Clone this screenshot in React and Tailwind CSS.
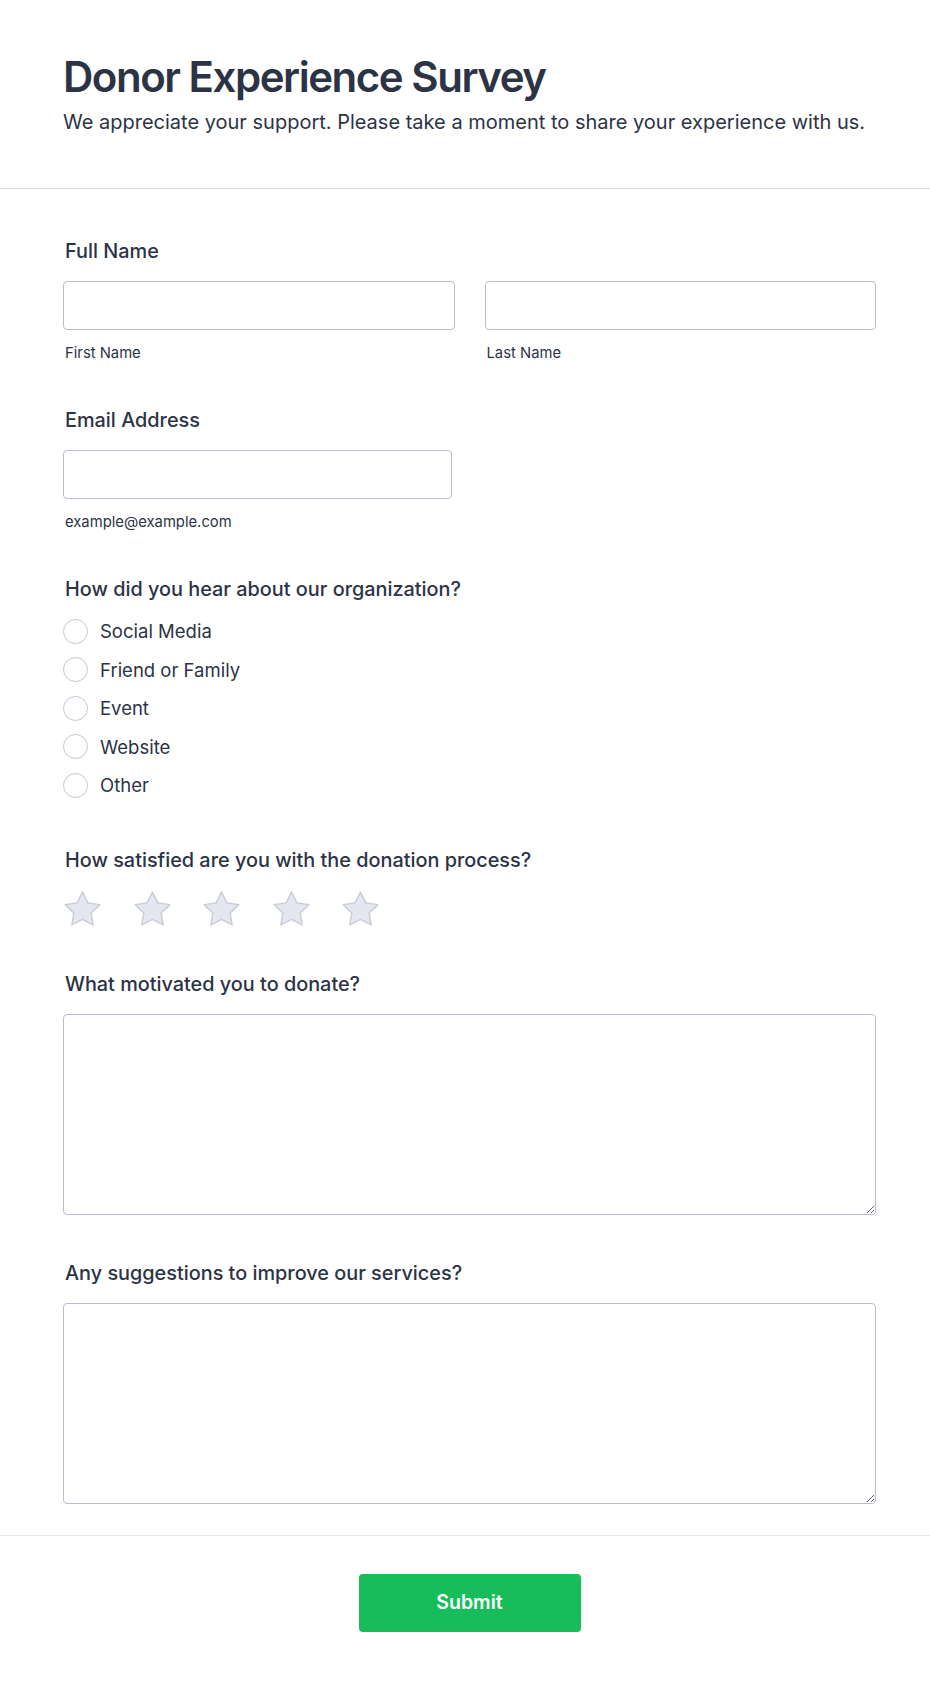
import React from "react";

const labelCls = "block pl-[2px] text-[19.85px] leading-[24px] font-medium text-[#2c3345]";
const subCls = "block pl-[2px] mt-[13px] text-[14.8px] leading-[20px] text-[#2c3345]";
const inputCls = "block h-[49px] w-full rounded-[4px] border border-[#b8bdc9] bg-white px-3 outline-none";

function Star() {
	return (
		<svg width="37" height="35" viewBox="1.4 1.4 21.2 20.2" className="block">
			<polygon
				points="12 2 15.09 8.26 22 9.27 17 14.14 18.18 21.02 12 17.77 5.82 21.02 7 14.14 2 9.27 8.91 8.26"
				fill="#e4e7ef"
				stroke="#c6cbd6"
				strokeWidth="0.8"
				strokeLinejoin="round"
			/>
		</svg>
	);
}

const sources = ["Social Media", "Friend or Family", "Event", "Website", "Other"];

export default function App() {
	return (
		<div className="min-h-[1681px] bg-white text-[#2c3345]" style={{ fontFamily: "Inter, 'Noto Sans', sans-serif" }}>
			<header className="border-b border-[#d8dbe3] pt-[52px] pb-[54px] pl-[63px] pr-[54px]">
				<h1 className="text-[42px] leading-[50px] font-semibold tracking-[-0.035em] text-[#2c3345]">
					Donor Experience Survey
				</h1>
				<p className="mt-[8px] text-[20px] leading-[24px] text-[#2c3345]">
					We appreciate your support. Please take a moment to share your experience with us.
				</p>
			</header>

			<form className="pl-[63px] pr-[54px] pt-[50px] pb-[31px]">
				{/* full name */}
				<div className="mb-[45px]">
					<label className={labelCls + " mb-[18px]"}>Full Name</label>
					<div className="grid grid-cols-2 gap-[30px]">
						<div>
							<input type="text" className={inputCls} />
							<span className={subCls}>First Name</span>
						</div>
						<div>
							<input type="text" className={inputCls} />
							<span className={subCls}>Last Name</span>
						</div>
					</div>
				</div>

				{/* email */}
				<div className="mb-[45px]">
					<label className={labelCls + " mb-[18px]"}>Email Address</label>
					<div className="w-[389px]">
						<input type="email" className={inputCls} />
						<span className={subCls}>example@example.com</span>
					</div>
				</div>

				{/* how did you hear */}
				<div className="mb-[43px]">
					<label className={labelCls}>How did you hear about our organization?</label>
					<div className="mt-[11px]">
						{sources.map((s) => (
							<div key={s} className="flex h-[38.5px] items-center">
								<span className="h-[25px] w-[25px] shrink-0 rounded-full border-[1.5px] border-[#c3c8d4] bg-white" />
								<span className="ml-[12px] text-[18.5px] leading-[22px] text-[#2c3345]">{s}</span>
							</div>
						))}
					</div>
				</div>

				{/* rating */}
				<div className="mb-[46px]">
					<label className={labelCls}>How satisfied are you with the donation process?</label>
					<div className="mt-[19px] flex gap-[32.5px] pl-px">
						{[1, 2, 3, 4, 5].map((n) => (
							<Star key={n} />
						))}
					</div>
				</div>

				<div className="mb-[46px]">
					<label className={labelCls + " mb-[18px]"}>What motivated you to donate?</label>
					<textarea className="block h-[201px] w-full rounded-[4px] border border-[#b8bdc9] bg-white p-3 outline-none" />
				</div>

				<div>
					<label className={labelCls + " mb-[18px]"}>Any suggestions to improve our services?</label>
					<textarea className="block h-[201px] w-full rounded-[4px] border border-[#b8bdc9] bg-white p-3 outline-none" />
				</div>
			</form>

			<div className="border-t border-[#e6e8ef] pt-[38px] pb-[49px] pl-[63px] pr-[54px] flex justify-center">
				<button
					type="button"
					className="h-[58px] w-[222px] rounded-[4px] bg-[#18bd5b] text-[19.5px] font-semibold text-white"
				>
					Submit
				</button>
			</div>
		</div>
	);
}
